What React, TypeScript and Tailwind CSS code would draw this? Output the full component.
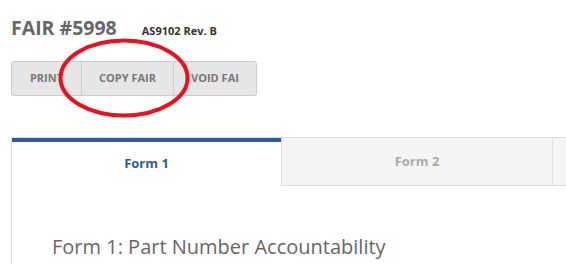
export default function App() {
  const font = { fontFamily: '"Open Sans", "Liberation Sans", sans-serif' };

  return (
    <div className="h-[264px] w-[566px] overflow-hidden bg-white pl-[11px]" style={font}>
      <div className="flex items-baseline gap-[25px] pt-[16px]">
        <h1 className="text-[19.5px] font-bold leading-[24px] text-[#666666]">FAIR #5998</h1>
        <span className="text-[11px] font-bold text-[#333333]">AS9102 Rev. B</span>
      </div>

      <div className="relative mt-[21px] w-fit">
        <div className="flex h-[35px] overflow-hidden rounded-[3px] border border-[#cccccc] bg-[#e6e6e6] text-[11px] font-bold text-[#777777]">
          <button className="flex w-[69px] items-center justify-center">PRINT</button>
          <button className="flex w-[92px] items-center justify-center border-l border-[#cccccc]">
            COPY FAIR
          </button>
          <button className="flex w-[83px] items-center justify-center border-l border-[#cccccc]">
            VOID FAI
          </button>
        </div>
        {/* red annotation circle */}
        <svg
          className="pointer-events-none absolute left-[47px] top-[-23px]"
          width="134"
          height="81"
          viewBox="0 0 134 81"
        >
          <ellipse cx="66" cy="40" rx="63.5" ry="37.5" fill="none" stroke="#e8121d" strokeWidth="4" />
        </svg>
      </div>

      <div className="mt-[41px] flex">
        <div className="flex h-[49px] w-[270px] flex-col border-l border-t border-[#dddddd]">
          <div className="h-[4px] bg-[#2b5c95]" />
          <div className="flex flex-1 items-center justify-center text-[13px] font-bold text-[#2b5c95]">
            Form 1
          </div>
        </div>
        <div className="flex h-[49px] w-[271px] items-center justify-center border-b border-l border-t border-[#dddddd] bg-[#f4f4f4] text-[13px] font-bold text-[#aaaaaa]">
          Form 2
        </div>
        <div className="h-[49px] flex-1 border-b border-l border-t border-[#dddddd] bg-[#f4f4f4]" />
      </div>

      <div className="h-full border-l border-[#dddddd] pl-[40px] pt-[47px]">
        <h2 className="text-[20px] leading-[28px] text-[#666666]">Form 1: Part Number Accountability</h2>
      </div>
    </div>
  );
}
